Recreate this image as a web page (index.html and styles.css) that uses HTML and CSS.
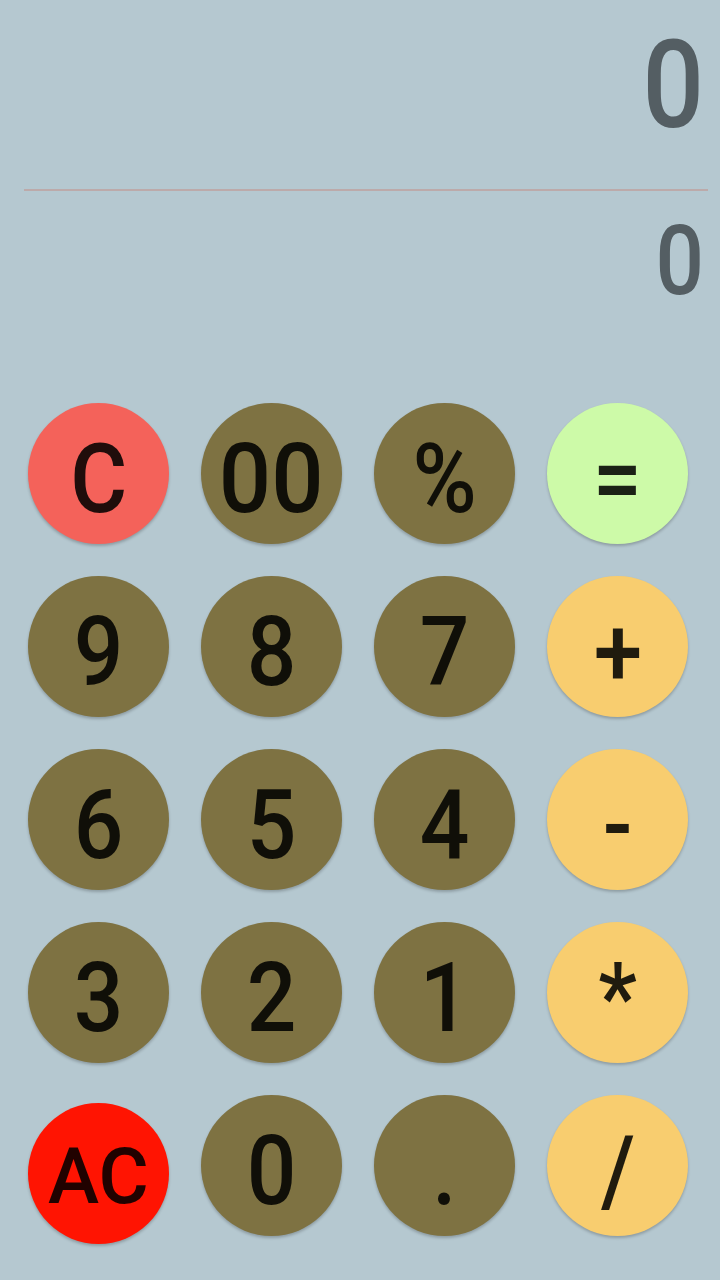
FILE: index.html
```html
<!DOCTYPE html>
<html lang="en">
<head>
    <meta charset="UTF-8">
    <meta name="viewport" content="width=device-width, initial-scale=1.0">
    <title>Calculator</title>
    <link rel="stylesheet" href="styles.css">
</head>
<body>
    <div class="calculator">
        <div class="display">
            <div class="input"><span>0</span></div>
            <div class="divider"></div>
            <div class="result"><span>0</span></div>
        </div>

        <div class="keypad">
            <button class="key key-clear"><span>C</span></button>
            <button class="key key-pair"><span>00</span></button>
            <button class="key"><span>%</span></button>
            <button class="key key-equals"><span>=</span></button>

            <button class="key"><span>9</span></button>
            <button class="key"><span>8</span></button>
            <button class="key"><span>7</span></button>
            <button class="key key-op"><span>+</span></button>

            <button class="key"><span>6</span></button>
            <button class="key"><span>5</span></button>
            <button class="key"><span>4</span></button>
            <button class="key key-op"><span>-</span></button>

            <button class="key"><span>3</span></button>
            <button class="key"><span>2</span></button>
            <button class="key"><span>1</span></button>
            <button class="key key-op"><span>*</span></button>

            <button class="key key-all-clear"><span>AC</span></button>
            <button class="key"><span>0</span></button>
            <button class="key"><span>.</span></button>
            <button class="key key-op"><span>/</span></button>
        </div>
    </div>
</body>
</html>
```

FILE: styles.css
```css
body {
    margin: 0;
    background-color: #b5c8d0;
    font-family: Roboto, "Liberation Sans", sans-serif;
}
.calculator {
    width: 720px;
    height: 1280px;
    display: flex;
    flex-direction: column;
}
.display {
    padding: 24px 0 0 24px;
    text-align: right;
    color: #545e63;
    font-weight: 500;
}
.display span {
    display: inline-block;
    transform: scaleX(0.88);
    transform-origin: right center;
}
.input,
.result {
    padding-right: 16px;
    line-height: 1;
}
.input {
    font-size: 123px;
}
.divider {
    height: 2px;
    margin: 42px 12px 0 0;
    background-color: #bcaaaa;
}
.result {
    margin-top: 22px;
    font-size: 97px;
}
.keypad {
    display: grid;
    grid-template-columns: repeat(4, 141px);
    grid-auto-rows: 141px;
    gap: 32px;
    padding-left: 28px;
    margin-top: 93px;
}
.key {
    width: 141px;
    height: 141px;
    border: none;
    border-radius: 50%;
    padding: 11px 0 0;
    display: flex;
    align-items: center;
    justify-content: center;
    background-color: #7e7242;
    color: rgba(0, 0, 0, 0.87);
    font-family: Roboto, "Liberation Sans", sans-serif;
    font-size: 97px;
    font-weight: 500;
    line-height: 1;
    box-shadow: 0 2px 3px rgba(0, 0, 0, 0.22);
    cursor: pointer;
}
.key span {
    display: inline-block;
    transform: scaleX(0.9);
}
.key-pair span {
    transform: scaleX(0.95);
}
.key-clear {
    background-color: #f4625a;
}
.key-equals {
    background-color: #cdfaa8;
}
.key-op {
    background-color: #f8cd6f;
}
.key-all-clear {
    background-color: #ff1402;
    font-size: 77px;
    padding-top: 8px;
    margin-top: 8px;
}
.key-all-clear span {
    transform: none;
}
```
